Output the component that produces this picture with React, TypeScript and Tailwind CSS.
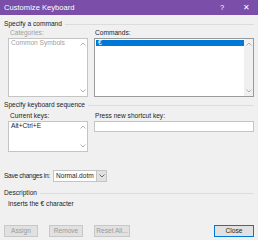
import React from "react";

const Up = () => (
  <svg width="6" height="4" viewBox="0 0 6 4" className="block">
    <path d="M0.5 3.5 L3 1 L5.5 3.5" fill="none" stroke="#a8a8a8" strokeWidth="0.9" />
  </svg>
);
const Down = () => (
  <svg width="6" height="4" viewBox="0 0 6 4" className="block">
    <path d="M0.5 0.5 L3 3 L5.5 0.5" fill="none" stroke="#a8a8a8" strokeWidth="0.9" />
  </svg>
);

const Scroll = () => (
  <div className="w-[9px] flex flex-col items-center justify-between py-[3px] bg-[#f0f0f0]">
    <Up />
    <Down />
  </div>
);

const Heading = ({ text }: { text: string }) => (
  <div className="flex items-center gap-[3px] h-[8px]">
    <span className="text-[#1e1e1e] whitespace-nowrap">{text}</span>
    <div className="flex-1 h-px bg-[#dcdcdc]" />
  </div>
);

const Btn = ({ text, primary }: { text: string; primary?: boolean }) => (
  <div
    className={
      "h-[12px] flex items-center justify-center bg-[#e1e1e1] border leading-[10px] whitespace-nowrap " +
      (primary ? "border-[#0078d7] text-[#1e1e1e]" : "border-[#c8c8c8] text-[#9a9a9a]")
    }
  >
    {text}
  </div>
);

export default function App() {
  return (
    <div
      className="w-[258px] h-[240px] bg-[#f0f0f0] text-[6.6px] leading-[8px] overflow-hidden"
      style={{ fontFamily: '"Liberation Sans", Arial, sans-serif' }}
    >
      <div className="h-[15px] bg-[#7a4ea9] flex items-center pl-[4px] text-white">
        <span className="text-[7.6px] flex-1">Customize Keyboard</span>
        <span className="text-[7.6px] w-[8px] mr-[16px] text-center">?</span>
        <span className="text-[7.6px] w-[8px] mr-[8px] text-center">✕</span>
      </div>
      <div className="px-[4px] pt-[5px]">
        <Heading text="Specify a command" />
        <div className="flex mt-[1px] pl-[4px]">
          <div className="w-[80px]">
            <div className="text-[#a0a0a0] h-[8px] pl-[2px]">Categories:</div>
            <div className="mt-[1px] h-[59px] border border-[#c4c4c4] bg-white flex">
              <div className="flex-1 text-[#a0a0a0] pl-[2px]">Common Symbols</div>
              <div className="w-[9px] flex flex-col items-center justify-between py-[3px]">
                <Up />
                <Down />
              </div>
            </div>
          </div>
          <div className="w-[160px] ml-[6px]">
            <div className="text-[#1e1e1e] h-[8px] pl-[1px]">Commands:</div>
            <div className="mt-[1px] h-[59px] border border-[#9a9a9a] bg-white flex">
              <div className="flex-1 pt-[1px] pl-[1px]">
                <div className="bg-[#0078d7] text-white h-[6px] leading-[6px] pl-[2px]">€</div>
              </div>
              <Scroll />
            </div>
          </div>
        </div>
        <div className="mt-[4px]">
          <Heading text="Specify keyboard sequence" />
        </div>
        <div className="flex mt-[3px] pl-[4px]">
          <div className="w-[80px]">
            <div className="text-[#1e1e1e] h-[8px] pl-[2px]">Current keys:</div>
            <div className="mt-[1px] h-[31px] border border-[#c4c4c4] bg-white flex">
              <div className="flex-1 text-[#1e1e1e] pl-[2px]">Alt+Ctrl+E</div>
              <div className="w-[9px] flex flex-col items-center justify-between py-[3px]">
                <Up />
                <Down />
              </div>
            </div>
          </div>
          <div className="w-[160px] ml-[6px]">
            <div className="text-[#1e1e1e] h-[8px] pl-[1px]">Press new shortcut key:</div>
            <div className="mt-[1px] h-[11px] border border-[#c4c4c4] bg-white" />
          </div>
        </div>
        <div className="flex items-center mt-[18px] h-[12px]">
          <span className="text-[#1e1e1e] whitespace-nowrap shrink-0 w-[49px] tracking-[-0.3px]">Save changes in:</span>
          <div className="w-[54px] h-[12px] border border-[#c4c4c4] bg-white flex shrink-0">
            <span className="flex-1 pl-[2px] leading-[10px] text-[#1e1e1e] whitespace-nowrap">Normal.dotm</span>
            <div className="w-[10px] bg-[#e1e1e1] border-l border-[#c4c4c4] flex items-center justify-center">
              <svg width="6" height="4" viewBox="0 0 6 4">
                <path d="M0.5 0.5 L3 3 L5.5 0.5" fill="none" stroke="#606060" strokeWidth="0.9" />
              </svg>
            </div>
          </div>
        </div>
        <div className="mt-[7px]">
          <Heading text="Description" />
        </div>
        <div className="pl-[4px] mt-[3px] text-[#1e1e1e]">Inserts the € character</div>
        <div className="flex mt-[17px]">
          <div className="w-[34px]"><Btn text="Assign" /></div>
          <div className="w-[34px] ml-[11px]"><Btn text="Remove" /></div>
          <div className="w-[36px] ml-[11px]"><Btn text="Reset All..." /></div>
          <div className="flex-1" />
          <div className="w-[40px]"><Btn text="Close" primary /></div>
        </div>
      </div>
    </div>
  );
}
